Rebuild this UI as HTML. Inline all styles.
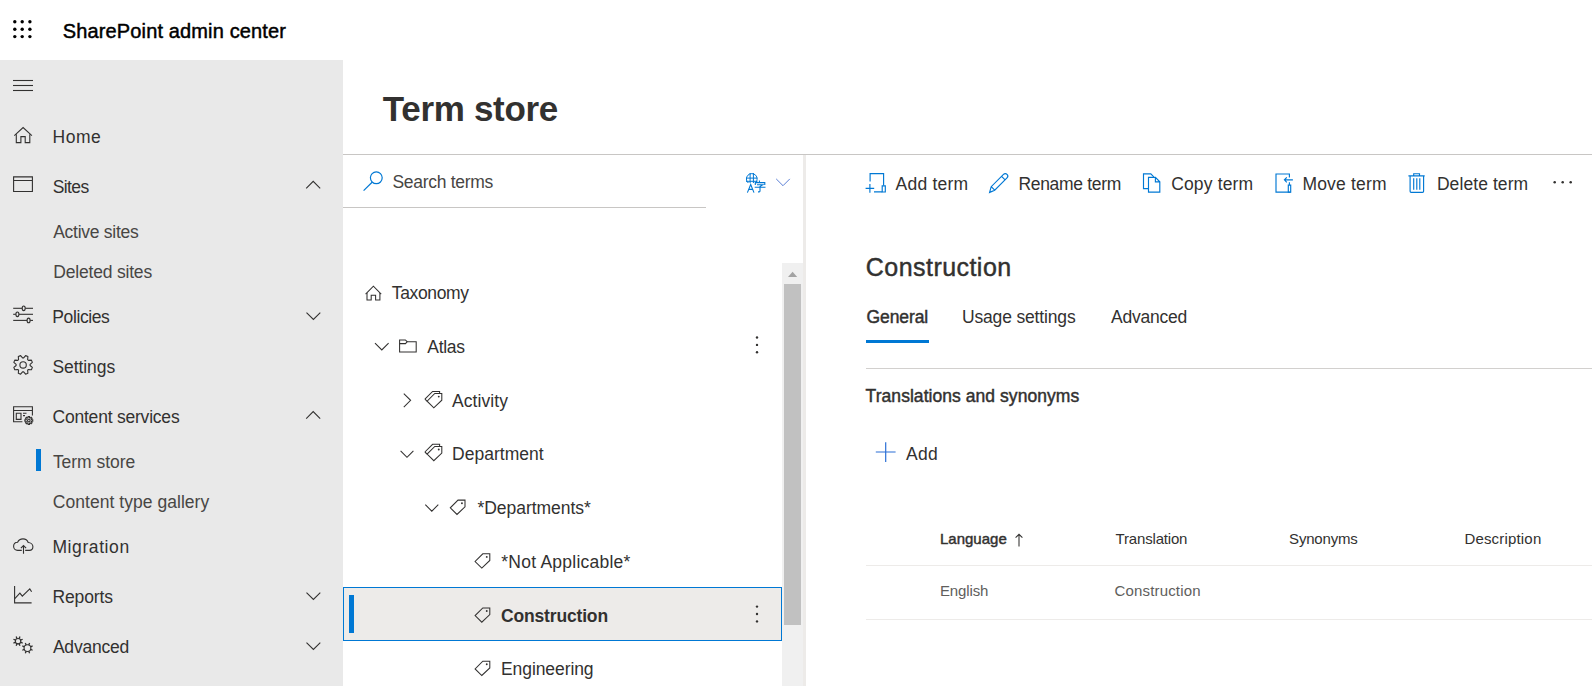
<!DOCTYPE html>
<html><head><meta charset="utf-8"><title>Term store - SharePoint admin center</title>
<style>
html,body{margin:0;padding:0;width:1592px;height:686px;overflow:hidden;background:#fff;}
body{position:relative;font-family:"Liberation Sans",sans-serif;}
.t{position:absolute;white-space:nowrap;}
.r{position:absolute;}
</style></head><body>
<div class="r" style="left:0;top:60px;width:343px;height:626px;background:#e9e9e9"></div>
<div class="r" style="left:343px;top:154px;width:1249px;height:1px;background:#c8c6c4"></div>
<div class="r" style="left:343px;top:207px;width:363px;height:1px;background:#c8c6c4"></div>
<div class="r" style="left:803px;top:155px;width:3px;height:531px;background:#edebe9"></div>
<div class="r" style="left:782px;top:263px;width:21px;height:423px;background:#f0f0f0"></div>
<div class="r" style="left:784px;top:284px;width:17px;height:341px;background:#c1c1c1"></div>
<div class="r" style="left:343px;top:587px;width:439px;height:54px;box-sizing:border-box;border:1px solid #0078d4;background:#edebe9"></div>
<div class="r" style="left:349px;top:595px;width:5px;height:38px;background:#0078d4"></div>
<div class="r" style="left:36px;top:449px;width:5px;height:22px;background:#0078d4"></div>
<div class="r" style="left:866px;top:340.4px;width:63px;height:2.5px;background:#0078d4"></div>
<div class="r" style="left:866px;top:368px;width:726px;height:1px;background:#d2d0ce"></div>
<div class="r" style="left:866px;top:565px;width:726px;height:1px;background:#edebe9"></div>
<div class="r" style="left:866px;top:619px;width:726px;height:1px;background:#edebe9"></div>
<div id="hdr" class="t" style="left:62.80px;top:11.07px;font-size:20px;line-height:40px;font-weight:400;color:#000;letter-spacing:0.136px;-webkit-text-stroke:0.45px #000;">SharePoint admin center</div><div id="n_home" class="t" style="left:52.60px;top:120.44px;font-size:17.5px;line-height:35.0px;font-weight:400;color:#323130;letter-spacing:0.467px;">Home</div><div id="n_sites" class="t" style="left:52.70px;top:169.84px;font-size:17.5px;line-height:35.0px;font-weight:400;color:#323130;letter-spacing:-0.600px;">Sites</div><div id="n_active" class="t" style="left:53.20px;top:215.14px;font-size:17.5px;line-height:35.0px;font-weight:400;color:#484644;letter-spacing:-0.273px;">Active sites</div><div id="n_deleted" class="t" style="left:53.20px;top:254.84px;font-size:17.5px;line-height:35.0px;font-weight:400;color:#484644;letter-spacing:-0.183px;">Deleted sites</div><div id="n_policies" class="t" style="left:52.30px;top:300.44px;font-size:17.5px;line-height:35.0px;font-weight:400;color:#323130;letter-spacing:-0.400px;">Policies</div><div id="n_settings" class="t" style="left:52.50px;top:350.44px;font-size:17.5px;line-height:35.0px;font-weight:400;color:#323130;letter-spacing:-0.085px;">Settings</div><div id="n_cs" class="t" style="left:52.50px;top:400.44px;font-size:17.5px;line-height:35.0px;font-weight:400;color:#323130;letter-spacing:-0.214px;">Content services</div><div id="n_ts" class="t" style="left:52.90px;top:445.34px;font-size:17.5px;line-height:35.0px;font-weight:400;color:#484644;letter-spacing:-0.044px;">Term store</div><div id="n_ctg" class="t" style="left:52.80px;top:484.54px;font-size:17.5px;line-height:35.0px;font-weight:400;color:#484644;letter-spacing:0.042px;">Content type gallery</div><div id="n_mig" class="t" style="left:52.40px;top:530.14px;font-size:17.5px;line-height:35.0px;font-weight:400;color:#323130;letter-spacing:0.600px;">Migration</div><div id="n_rep" class="t" style="left:52.40px;top:579.74px;font-size:17.5px;line-height:35.0px;font-weight:400;color:#323130;letter-spacing:-0.100px;">Reports</div><div id="n_adv" class="t" style="left:52.90px;top:630.44px;font-size:17.5px;line-height:35.0px;font-weight:400;color:#323130;letter-spacing:-0.200px;">Advanced</div><div id="title" class="t" style="left:382.80px;top:74.27px;font-size:35px;line-height:70px;font-weight:700;color:#323130;letter-spacing:-0.311px;">Term store</div><div id="search" class="t" style="left:392.40px;top:165.44px;font-size:17.5px;line-height:35.0px;font-weight:400;color:#484644;letter-spacing:-0.291px;">Search terms</div><div id="t_tax" class="t" style="left:391.80px;top:275.74px;font-size:17.5px;line-height:35.0px;font-weight:400;color:#323130;letter-spacing:-0.372px;">Taxonomy</div><div id="t_atlas" class="t" style="left:427.30px;top:329.84px;font-size:17.5px;line-height:35.0px;font-weight:400;color:#323130;letter-spacing:-0.300px;">Atlas</div><div id="t_act" class="t" style="left:452.00px;top:384.14px;font-size:17.5px;line-height:35.0px;font-weight:400;color:#323130;letter-spacing:0.085px;">Activity</div><div id="t_dep" class="t" style="left:452.00px;top:436.54px;font-size:17.5px;line-height:35.0px;font-weight:400;color:#323130;letter-spacing:0.023px;">Department</div><div id="t_deps" class="t" style="left:477.50px;top:490.64px;font-size:17.5px;line-height:35.0px;font-weight:400;color:#323130;letter-spacing:-0.050px;">*Departments*</div><div id="t_na" class="t" style="left:501.30px;top:544.54px;font-size:17.5px;line-height:35.0px;font-weight:400;color:#323130;letter-spacing:0.240px;">*Not Applicable*</div><div id="t_con" class="t" style="left:501.00px;top:599.14px;font-size:17.5px;line-height:35.0px;font-weight:700;color:#323130;letter-spacing:-0.163px;">Construction</div><div id="t_eng" class="t" style="left:501.00px;top:652.44px;font-size:17.5px;line-height:35.0px;font-weight:400;color:#323130;letter-spacing:-0.080px;">Engineering</div><div id="b_add" class="t" style="left:895.60px;top:166.84px;font-size:17.5px;line-height:35.0px;font-weight:400;color:#323130;letter-spacing:0.200px;">Add term</div><div id="b_ren" class="t" style="left:1018.40px;top:166.54px;font-size:17.5px;line-height:35.0px;font-weight:400;color:#323130;letter-spacing:-0.300px;">Rename term</div><div id="b_copy" class="t" style="left:1171.20px;top:167.44px;font-size:17.5px;line-height:35.0px;font-weight:400;color:#323130;letter-spacing:0.150px;">Copy term</div><div id="b_move" class="t" style="left:1302.40px;top:166.84px;font-size:17.5px;line-height:35.0px;font-weight:400;color:#323130;letter-spacing:0.199px;">Move term</div><div id="b_del" class="t" style="left:1436.90px;top:166.54px;font-size:17.5px;line-height:35.0px;font-weight:400;color:#323130;letter-spacing:0.080px;">Delete term</div><div id="h_con" class="t" style="left:865.80px;top:242.24px;font-size:25px;line-height:50px;font-weight:400;color:#323130;letter-spacing:0.455px;-webkit-text-stroke:0.45px #323130;">Construction</div><div id="tab_gen" class="t" style="left:866.60px;top:299.54px;font-size:17.5px;line-height:35.0px;font-weight:400;color:#323130;letter-spacing:-0.100px;-webkit-text-stroke:0.45px #323130;">General</div><div id="tab_use" class="t" style="left:961.90px;top:300.44px;font-size:17.5px;line-height:35.0px;font-weight:400;color:#323130;letter-spacing:-0.153px;">Usage settings</div><div id="tab_adv" class="t" style="left:1111.10px;top:300.44px;font-size:17.5px;line-height:35.0px;font-weight:400;color:#323130;letter-spacing:-0.257px;">Advanced</div><div id="sec" class="t" style="left:865.60px;top:378.54px;font-size:17.5px;line-height:35.0px;font-weight:400;color:#323130;letter-spacing:0.050px;-webkit-text-stroke:0.45px #323130;">Translations and synonyms</div><div id="add" class="t" style="left:906.00px;top:436.84px;font-size:17.5px;line-height:35.0px;font-weight:400;color:#323130;letter-spacing:0.300px;">Add</div><div id="th_lang" class="t" style="left:940.00px;top:524.00px;font-size:15px;line-height:30px;font-weight:400;color:#323130;letter-spacing:0.000px;-webkit-text-stroke:0.45px #323130;">Language</div><div id="th_tr" class="t" style="left:1115.60px;top:524.00px;font-size:15px;line-height:30px;font-weight:400;color:#323130;letter-spacing:-0.180px;">Translation</div><div id="th_syn" class="t" style="left:1289.10px;top:524.00px;font-size:15px;line-height:30px;font-weight:400;color:#323130;letter-spacing:-0.200px;">Synonyms</div><div id="th_desc" class="t" style="left:1464.40px;top:524.00px;font-size:15px;line-height:30px;font-weight:400;color:#323130;letter-spacing:0.180px;">Description</div><div id="td_en" class="t" style="left:940.00px;top:575.80px;font-size:15px;line-height:30px;font-weight:400;color:#605e5c;letter-spacing:-0.133px;">English</div><div id="td_con" class="t" style="left:1114.50px;top:575.80px;font-size:15px;line-height:30px;font-weight:400;color:#605e5c;letter-spacing:0.163px;">Construction</div>
<svg style="position:absolute;left:0;top:0" width="1592" height="686" viewBox="0 0 1592 686">
<g fill="#000">
<circle cx="14.8" cy="21.8" r="1.7"/>
<circle cx="14.8" cy="29.2" r="1.7"/>
<circle cx="14.8" cy="36.6" r="1.7"/>
<circle cx="22.2" cy="21.8" r="1.7"/>
<circle cx="22.2" cy="29.2" r="1.7"/>
<circle cx="22.2" cy="36.6" r="1.7"/>
<circle cx="29.9" cy="21.8" r="1.7"/>
<circle cx="29.9" cy="29.2" r="1.7"/>
<circle cx="29.9" cy="36.6" r="1.7"/>
</g>
<g fill="none" stroke="#323130" stroke-width="1.1">
<path d="M13,80.5 H33"/>
<path d="M13,85.5 H33"/>
<path d="M13,90.5 H33"/>
<path d="M14.3,135.6 L23.1,127.6 L31.9,135.6"/>
<path d="M16.3,134.2 V142.6 H20.9 V136.6 H25.2 V142.6 H29.8 V134.2"/>
<path d="M13.6,176.9 H32.4 V191.5 H13.6 Z M13.6,180.5 H32.4"/>
<path d="M13.2,308.3 H33"/>
<ellipse cx="23.7" cy="308.3" rx="1.5" ry="2.3" fill="#e9e9e9"/>
<path d="M13.2,314.3 H33"/>
<ellipse cx="17.4" cy="314.3" rx="1.5" ry="2.3" fill="#e9e9e9"/>
<path d="M13.2,320.4 H33"/>
<ellipse cx="28.6" cy="320.4" rx="1.5" ry="2.3" fill="#e9e9e9"/>
<path d="M32.37,367.39 L31.42,369.69 L28.43,369.44 L27.64,370.23 L27.89,373.22 L25.59,374.17 L23.66,371.88 L22.54,371.88 L20.61,374.17 L18.31,373.22 L18.56,370.23 L17.77,369.44 L14.78,369.69 L13.83,367.39 L16.12,365.46 L16.12,364.34 L13.83,362.41 L14.78,360.11 L17.77,360.36 L18.56,359.57 L18.31,356.58 L20.61,355.63 L22.54,357.92 L23.66,357.92 L25.59,355.63 L27.89,356.58 L27.64,359.57 L28.43,360.36 L31.42,360.11 L32.37,362.41 L30.08,364.34 L30.08,365.46Z" stroke-linejoin="round"/>
<circle cx="23.1" cy="364.9" r="3.2"/>
<path d="M22.4,421.7 H13.6 V406.8 H32.4 V415.5 M13.6,410.5 H32.4"/>
<path d="M16.3,413.2 H21 V419.4 H16.3 Z"/>
<path d="M23,413.3 H26.5 M23,415.6 H25"/>
<path d="M31.50,419.75 L32.74,419.80 L32.74,421.20 L31.50,421.25 L31.24,421.88 L32.08,422.79 L31.09,423.78 L30.18,422.94 L29.55,423.20 L29.50,424.44 L28.10,424.44 L28.05,423.20 L27.42,422.94 L26.51,423.78 L25.52,422.79 L26.36,421.88 L26.10,421.25 L24.86,421.20 L24.86,419.80 L26.10,419.75 L26.36,419.12 L25.52,418.21 L26.51,417.22 L27.42,418.06 L28.05,417.80 L28.10,416.56 L29.50,416.56 L29.55,417.80 L30.18,418.06 L31.09,417.22 L32.08,418.21 L31.24,419.12Z"/>
<circle cx="28.8" cy="420.5" r="1.3"/>
<path d="M21.8,550.4 H17.6 C15.2,550.4 13.6,548.5 13.6,546.3 C13.6,544.1 15.2,542.3 17.6,542.2 C18.6,540 20.6,538.9 23,538.9 C25.5,538.9 27.4,540.3 28.2,542.5 C30.9,542.6 32.9,544.5 32.9,546.8 C32.9,548.9 31.3,550.4 29.4,550.4 H25.2"/>
<path d="M23.5,553.8 V545.6 M20.9,548.2 L23.5,545.5 L26.1,548.2"/>
<path d="M14.6,586 V602.9 H31.6"/>
<path d="M14.8,598.6 L19.9,593.1 L22.3,596.1 L29.8,588.9 L31.6,591.8"/>
<circle cx="18.06" cy="641.15" r="2.7"/>
<path d="M20.55,642.18 L22.68,643.06 M19.09,643.64 L19.97,645.77 M17.03,643.64 L16.15,645.77 M15.57,642.18 L13.44,643.06 M15.57,640.12 L13.44,639.24 M17.03,638.66 L16.15,636.53 M19.09,638.66 L19.97,636.53 M20.55,640.12 L22.68,639.24" stroke-width="1.3"/>
<circle cx="27.46" cy="648.1" r="3.4"/>
<path d="M30.60,649.40 L32.63,650.24 M28.76,651.24 L29.60,653.27 M26.16,651.24 L25.32,653.27 M24.32,649.40 L22.29,650.24 M24.32,646.80 L22.29,645.96 M26.16,644.96 L25.32,642.93 M28.76,644.96 L29.60,642.93 M30.60,646.80 L32.63,645.96" stroke-width="1.3"/>
<path d="M306.2,188.4 L313.2,181.4 L320.2,188.4"/>
<path d="M306.2,418.6 L313.2,411.6 L320.2,418.6"/>
<path d="M306.5,312.6 L313.4,319.40000000000003 L320.3,312.6"/>
<path d="M306.5,592.6 L313.4,599.4 L320.3,592.6"/>
<path d="M306.5,642.6 L313.4,649.4 L320.3,642.6"/>
</g>
<g fill="none" stroke="#0078d4" stroke-width="1.2">
<circle cx="376.3" cy="177.8" r="5.9"/>
<path d="M372.1,182.2 L363.6,190.6"/>
</g>
<defs><clipPath id="gclip"><rect x="740" y="170" width="17.8" height="13"/></clipPath></defs>
<g fill="none" stroke="#0078d4" stroke-width="1.1">
<g clip-path="url(#gclip)"><circle cx="751.8" cy="179" r="5.4" stroke-width="1"/><path d="M750.1,173 V183 M753.4,173 V183 M746,178.1 H757.6 M746,181.3 H757.6" stroke-width="1"/></g>
<path d="M747.4,192.6 L750.7,184.5 L754,192.6 M748.6,189.4 H752.8"/>
<path d="M759.4,180.6 V182.5 M755.3,184.9 V182.6 H764.8 V184.9 M757,184.7 H762.8 L760,186.6 V190.9 Q760,192 758,191.9 M754.7,187.3 H765.5"/>
<path d="M776.2,178.9 L783,185.7 L789.8,178.9" stroke="#5a7fd6" stroke-width="1"/>
</g>
<g fill="none" stroke="#323130" stroke-width="1.05">
<path d="M365.6,294.2 L373.4,286.2 L381.2,294.2"/>
<path d="M367,293 V300 H371.2 V295.3 H375.6 V300 H379.9 V293"/>
<path d="M399.6,352 V339.9 H405.3 L407.2,341.7 H416.2 V352 Z"/>
<path d="M399.6,343.6 H405.5 L407.2,341.7"/>
<path d="M375,343.1 L381.8,349.9 L388.6,343.1"/>
<path d="M403.8,393.6 L410.6,400.3 L403.8,407.1"/>
<path d="M400.6,450.8 L407,457.3 L413.4,450.8"/>
<path d="M425.3,504.6 L431.8,511.2 L438.3,504.6"/>
<path d="M434.80,393.50 L441.80,393.50 L441.80,400.20 L433.80,407.80 L427.10,401.20Z"/><path d="M424.90,399.10 L432.60,391.40 L439.60,391.40 L439.60,393.50"/><path d="M424.90,399.10 L427.10,401.20"/><circle cx="438.75" cy="396.60" r="0.95" fill="#323130" stroke="none"/>
<path d="M434.80,446.40 L441.80,446.40 L441.80,453.10 L433.80,460.70 L427.10,454.10Z"/><path d="M424.90,452.00 L432.60,444.30 L439.60,444.30 L439.60,446.40"/><path d="M424.90,452.00 L427.10,454.10"/><circle cx="438.75" cy="449.50" r="0.95" fill="#323130" stroke="none"/>
<path d="M458.00,500.10 L465.00,500.10 L465.00,506.80 L457.00,514.40 L450.30,507.80Z"/><circle cx="461.95" cy="503.20" r="0.95" fill="#323130" stroke="none"/>
<path d="M482.80,553.80 L489.80,553.80 L489.80,560.50 L481.80,568.10 L475.10,561.50Z"/><circle cx="486.75" cy="556.90" r="0.95" fill="#323130" stroke="none"/>
<path d="M482.80,607.90 L489.80,607.90 L489.80,614.60 L481.80,622.20 L475.10,615.60Z"/><circle cx="486.75" cy="611.00" r="0.95" fill="#323130" stroke="none"/>
<path d="M482.80,661.20 L489.80,661.20 L489.80,667.90 L481.80,675.50 L475.10,668.90Z"/><circle cx="486.75" cy="664.30" r="0.95" fill="#323130" stroke="none"/>
</g>
<g fill="#323130">
<circle cx="757" cy="337.5" r="1.2"/>
<circle cx="757" cy="344.9" r="1.2"/>
<circle cx="757" cy="352.29999999999995" r="1.2"/>
<circle cx="757" cy="606.6" r="1.2"/>
<circle cx="757" cy="614.0" r="1.2"/>
<circle cx="757" cy="621.4" r="1.2"/>
<circle cx="1554.7" cy="182.3" r="1.25"/>
<circle cx="1562.7" cy="182.3" r="1.25"/>
<circle cx="1570.7" cy="182.3" r="1.25"/>
</g>
<path d="M788,277 L792.6,271.8 L797.2,277 Z" fill="#a3a3a3"/>
<g fill="none" stroke="#0078d4" stroke-width="1.15">
<path d="M870.1,181.6 V173.6 H883.6 V185.6 M874,191.9 H882.3"/>
<path d="M882.2,185.8 H885.3 V192 H882.2 Z"/>
<path d="M865.6,188.4 H874.2 M869.9,184.1 V192.7"/>
<path d="M989.6,192.4 L991.2,186.7 L1003.5,174.4 A2.45,2.45 0 0 1 1007,177.9 L994.7,190.2 Z M991.2,186.7 L994.7,190.2 M1001.6,176.3 L1005.1,179.8"/>
<path d="M1148.3,188.6 H1143.5 V173.8 H1150.8 L1153.8,176.9"/>
<path d="M1148.5,177.4 H1155.4 L1159.8,181.8 V192.1 H1148.5 Z M1155.4,177.4 V181.8 H1159.8"/>
<path d="M1289.4,177.6 V174 H1276 V192.1 H1290.6 M1289.4,182.3 V185.1"/>
<path d="M1288.3,185.1 H1290.7 V192.2 H1288.3 Z"/>
<path d="M1292.9,179.8 H1285 M1286.8,177.3 L1284.4,179.8 L1286.8,182.3"/>
<path d="M1408.4,175.9 H1424.7 M1413.7,175.9 V173.7 H1419.5 V175.9 M1410.1,175.9 V191.3 Q1410.1,192.3 1411.1,192.3 H1422.6 Q1423.6,192.3 1423.6,191.3 V175.9 M1413.7,178.3 V189.7 M1416.8,178.3 V189.7 M1419.8,178.3 V189.7"/>
<path d="M875.8,452 H895.6 M885.7,442.2 V461.9" stroke="#2b6fd6" stroke-width="1.2"/>
</g>
<path d="M1019,546.6 V534.3 M1015.6,537.7 L1019,534.3 L1022.4,537.7" fill="none" stroke="#323130" stroke-width="1.05"/>
</svg>
</body></html>
